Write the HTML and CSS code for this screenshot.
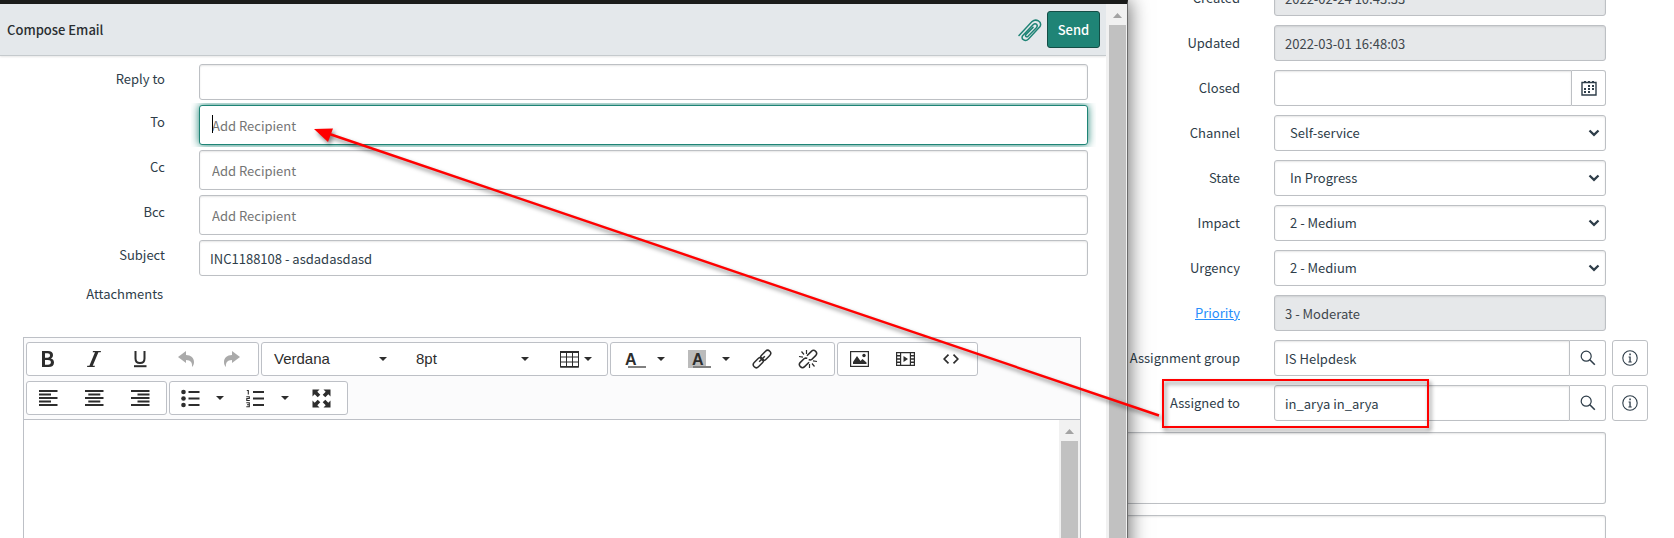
FILE: index.html
```html
<!DOCTYPE html>
<html lang="en">
<head>
<meta charset="utf-8">
<title>Compose Email</title>
<link rel="stylesheet" href="styles.css">
</head>
<body>
<svg class="defs" aria-hidden="true">
  <symbol id="caret" viewBox="0 0 8 4"><path d="M0 0h8L4 4z"/></symbol>
  <symbol id="search" viewBox="0 0 16 16"><circle cx="6.2" cy="6.2" r="5" fill="none" stroke="currentColor" stroke-width="1.2"/><path d="M9.8 9.8l5 5" stroke="currentColor" stroke-width="1.6"/></symbol>
  <symbol id="info" viewBox="0 0 16 16"><circle cx="8" cy="8" r="7.2" fill="none" stroke="currentColor" stroke-width="1.1"/><path d="M7.3 3.6h1.5v1.6H7.3zM6.6 6.6h2.1v5h1v.9H6.4v-.9h1V7.5h-.8z"/></symbol>
  <symbol id="chevron" viewBox="0 0 12 8"><path d="M1.500 1.500L6 5.800l4.500-4.300" fill="none" stroke="currentColor" stroke-width="2.300"/></symbol>
</svg>
<div class="page">
  <section class="compose">
    <div class="compose-main">
      <header class="compose-header">
        <h1 class="compose-title">Compose Email</h1>
        <button class="clip-button" type="button" aria-label="Add attachment">
          <svg class="outline" width="24" height="24" viewBox="0 0 24 24" stroke="currentColor" stroke-width="1.5" stroke-linecap="round"><path d="M1 17.500L14 3.600C18 .2 24.500 3.600 22 8.600L10.500 21C7.500 24 2.800 21.500 4.500 17.900L15 6.800C17.800 4.500 20.500 7 18.400 9.700L10 18.300C8.300 19.600 6.800 18 8 16.400L15 9.400"/></svg>
        </button>
        <button class="send-button" type="button">Send</button>
      </header>
      <form class="mail-form">
        <div class="mail-row"><label class="mail-label" for="reply">Reply to</label><input class="field" id="reply" type="text"></div>
        <div class="mail-row"><label class="mail-label" for="to">To</label><div class="focus-wrap"><input class="field field-recipient field-focus" id="to" type="text" placeholder="Add Recipient"><span class="text-cursor"></span></div></div>
        <div class="mail-row"><label class="mail-label" for="cc">Cc</label><input class="field field-recipient" id="cc" type="text" placeholder="Add Recipient"></div>
        <div class="mail-row"><label class="mail-label" for="bcc">Bcc</label><input class="field field-recipient" id="bcc" type="text" placeholder="Add Recipient"></div>
        <div class="mail-row"><label class="mail-label" for="subject">Subject</label><input class="field" id="subject" type="text" value="INC1188108 - asdadasdasd"></div>
        <div class="mail-row attachments"><span class="mail-label">Attachments</span></div>
      </form>
      <div class="editor">
        <div class="toolbar">
          <div class="group">
            <button class="tool" type="button" aria-label="Bold"><svg width="20" height="20" viewBox="0 0 20 20"><path fill-rule="evenodd" d="M4 2h6c3.200 0 5 1.400 5 4 0 1.700-.8 2.900-2.200 3.500 1.900.5 3.200 1.800 3.200 3.900 0 2.900-2 4.600-5.300 4.600H4zm3 2.300V8.700h2.500c1.600 0 2.500-.8 2.500-2.200s-.9-2.200-2.500-2.200zm0 6.600v4.800h3c1.900 0 2.900-.8 2.900-2.400s-1.100-2.400-3-2.400z"/></svg></button>
            <button class="tool" type="button" aria-label="Italic"><svg width="20" height="20" viewBox="0 0 20 20"><path d="M9 2h8l-.3 1.200h-2.300L8.700 16.800h2.200l-.3 1.200H3l.3-1.200h2.100L11 3.200H8.700z"/></svg></button>
            <button class="tool" type="button" aria-label="Underline"><svg width="20" height="20" viewBox="0 0 20 20"><path d="M5.500 2v7.500c0 3.200 1.700 4.500 4.500 4.500s4.500-1.300 4.500-4.500V2" fill="none" stroke="currentColor" stroke-width="2"/><path d="M4 16.200h12.500v2H4z"/></svg></button>
            <button class="tool tool-off" type="button" aria-label="Undo" disabled><svg width="20" height="20" viewBox="0 0 20 20"><path d="M2 8l8-6v4c5 0 8 3 8 7 0 2-.6 3.700-2 5 .5-4-1-7-6-7v3z"/></svg></button>
            <button class="tool tool-off" type="button" aria-label="Redo" disabled><svg width="20" height="20" viewBox="0 0 20 20"><path d="M18 8l-8-6v4c-5 0-8 3-8 7 0 2 .6 3.700 2 5-.5-4 1-7 6-7v3z"/></svg></button>
          </div>
          <div class="group">
            <button class="picker" type="button">Verdana<svg class="caret"><use href="#caret"/></svg></button>
            <button class="picker" type="button">8pt<svg class="caret"><use href="#caret"/></svg></button>
            <button class="tool table-tool" type="button" aria-label="Table"><svg width="19" height="17" viewBox="0 0 19 17"><path d="M.5 1h18v15H.5zM.5 6h18M.5 11h18M6.500 1v15M12.500 1v15" fill="none" stroke="currentColor" stroke-width="1"/><path d="M0 0h19v2H0zM0 15h19v1.500H0z"/></svg><svg class="caret"><use href="#caret"/></svg></button>
          </div>
          <div class="group">
            <button class="tool color-tool" type="button" aria-label="Text color"><svg class="swatch" width="24" height="20"><text x="2" y="16">A</text><path class="swatch-line" d="M5 17h18v2H5z"/></svg></button>
            <button class="drop color-drop" type="button" aria-label="Text color options"><svg class="caret"><use href="#caret"/></svg></button>
            <button class="tool color-tool" type="button" aria-label="Background color"><svg class="swatch" width="24" height="20"><path class="swatch-fill" d="M0 1h18v18H0z"/><text x="4" y="16">A</text><path class="swatch-line" d="M5 17h18v2H5z"/></svg></button>
            <button class="drop color-drop" type="button" aria-label="Background color options"><svg class="caret"><use href="#caret"/></svg></button>
            <button class="tool" type="button" aria-label="Insert link"><svg class="outline" width="20" height="20" viewBox="0 0 20 20" stroke="currentColor" stroke-width="1.500"><g transform="rotate(-45 10 10)"><rect x="-1" y="7" width="11.600" height="6" rx="3"/><rect x="9.400" y="7" width="11.600" height="6" rx="3"/><path d="M6 10h8"/></g></svg></button>
            <button class="tool" type="button" aria-label="Remove link"><svg class="outline" width="20" height="20" viewBox="0 0 20 20" stroke="currentColor" stroke-width="1.500"><g transform="rotate(-45 10 10)"><path d="M8.500 7H2.200a3 3 0 0 0 0 6h6.300M11.500 7h6.300a3 3 0 0 1 0 6h-6.300M8.500 7l1.500 2M11.500 13l-1.500-2"/></g><path d="M8.500 1v4M3.500 2.500l2.500 3M1 7.500l4 .6M11.500 19v-4M16.500 17.500l-2.500-3M19 12.500l-4-.6" stroke-width="1.200"/></svg></button>
          </div>
          <div class="group">
            <button class="tool" type="button" aria-label="Insert image"><svg width="19" height="16" viewBox="0 0 19 16"><rect x=".6" y=".6" width="17.800" height="14.800" fill="none" stroke="currentColor" stroke-width="1.200"/><path d="M3 13V11l4-6 3.500 5L12.500 8l4 3.500V13z"/><circle cx="14" cy="4.500" r="1.700"/></svg></button>
            <button class="tool" type="button" aria-label="Insert video"><svg width="19" height="14" viewBox="0 0 19 14"><path d="M.6.6h17.800v12.800H.6zM4.600.6v12.800M14.400.6v12.800" fill="none" stroke="currentColor" stroke-width="1.200"/><path d="M0 3h5v1.600H0zM0 6.200h5v1.600H0zM0 9.500h5v1.600H0zM14 3h5v1.600h-5zM14 6.200h5v1.600h-5zM14 9.500h5v1.600h-5zM7.500 4l4.500 3-4.500 3z"/></svg></button>
            <button class="tool" type="button" aria-label="Source code"><svg width="16" height="10" viewBox="0 0 16 10"><path d="M5.500.7L1.200 5l4.300 4.300M10.500.7L14.800 5l-4.300 4.300" fill="none" stroke="currentColor" stroke-width="1.700"/></svg></button>
          </div>
          <div class="group">
            <button class="tool" type="button" aria-label="Align left"><svg width="19" height="16" viewBox="0 0 19 16"><path d="M0 0h18.500v2H0zM0 3.500h12v2H0zM0 7h18.500v2H0zM0 10.500h12v2H0zM0 14h18.500v2H0z"/></svg></button>
            <button class="tool" type="button" aria-label="Align center"><svg width="19" height="16" viewBox="0 0 19 16"><path d="M0 0h18.500v2H0zM3.300 3.500h12v2h-12zM0 7h18.500v2H0zM3.300 10.500h12v2h-12zM0 14h18.500v2H0z"/></svg></button>
            <button class="tool" type="button" aria-label="Align right"><svg width="19" height="16" viewBox="0 0 19 16"><path d="M0 0h18.500v2H0zM6.500 3.500h12v2h-12zM0 7h18.500v2H0zM6.500 10.500h12v2h-12zM0 14h18.500v2H0z"/></svg></button>
          </div>
          <div class="group">
            <button class="tool list-tool" type="button" aria-label="Bullet list"><svg width="19" height="19" viewBox="0 0 19 19"><circle cx="2.500" cy="3" r="2.300"/><circle cx="2.500" cy="9.500" r="2.300"/><circle cx="2.500" cy="16" r="2.300"/><path d="M7.500 2h11v2h-11zM7.500 8.500h11v2h-11zM7.500 15h11v2h-11z"/></svg></button>
            <button class="drop" type="button" aria-label="Bullet list options"><svg class="caret"><use href="#caret"/></svg></button>
            <button class="tool list-tool" type="button" aria-label="Numbered list"><svg width="19" height="19" viewBox="0 0 19 19"><path d="M.8 1.500h1.500v4M.3 7.800h3v1.700h-2.500v2h3M.3 13.700h3v4h-3M1 15.700h2" fill="none" stroke="currentColor" stroke-width="1.100"/><path d="M7 2h11v2H7zM7 8.500h11v2H7zM7 15h11v2H7z"/></svg></button>
            <button class="drop" type="button" aria-label="Numbered list options"><svg class="caret"><use href="#caret"/></svg></button>
            <button class="tool" type="button" aria-label="Full screen"><svg width="19" height="19" viewBox="0 0 19 19"><path d="M.5.5h7L5.300 2.700l3 3L5.700 8.300l-3-3L.5 7.500zM18.500.5v7l-2.200-2.200-3 3-2.600-2.600 3-3L11.500.5zM.5 18.500v-7l2.200 2.200 3-3 2.600 2.600-3 3 2.200 2.200zM18.500 18.500h-7l2.200-2.200-3-3 2.600-2.600 3 3 2.200-2.200z"/></svg></button>
          </div>
        </div>
        <div class="editor-body">
          <div class="editor-text" contenteditable="true" role="textbox" aria-label="Message body"></div>
          <div class="scrollbar"><svg class="scroll-arrow"><path d="M0 5L4.500 0 9 5z"/></svg><div class="thumb"></div></div>
        </div>
      </div>
    </div>
    <div class="scrollbar scrollbar-outer"><svg class="scroll-arrow"><path d="M0 5L4.500 0 9 5z"/></svg><div class="thumb"></div></div>
  </section>

  <form class="record">
    <div class="record-row"><label class="record-label" for="created">Created</label><input class="field" id="created" type="text" value="2022-02-24 10:43:33" readonly></div>
    <div class="record-row"><label class="record-label" for="updated">Updated</label><input class="field" id="updated" type="text" value="2022-03-01 16:48:03" readonly></div>
    <div class="record-row"><label class="record-label" for="closed">Closed</label><div class="combo"><input class="field" id="closed" type="text"><button class="addon addon-date" type="button" aria-label="Pick date"><svg width="16" height="16" viewBox="0 0 16 16"><path d="M1 2.500h14V15H1z" fill="none" stroke="currentColor" stroke-width="1.400"/><path d="M3 1h2v2H3zM7 1h2v2H7zM11 1h2v2h-2zM7 5h2v2H7zM11 5h2v2h-2zM3 8h2v2H3zM7 8h2v2H7zM11 8h2v2h-2zM3 11h2v2H3zM7 11h2v2H7z"/></svg></button></div></div>
    <div class="record-row"><label class="record-label" for="channel">Channel</label><div class="select-wrap"><select class="field" id="channel"><option>Self-service</option></select><svg class="chevron"><use href="#chevron"/></svg></div></div>
    <div class="record-row"><label class="record-label" for="state">State</label><div class="select-wrap"><select class="field" id="state"><option>In Progress</option></select><svg class="chevron"><use href="#chevron"/></svg></div></div>
    <div class="record-row"><label class="record-label" for="impact">Impact</label><div class="select-wrap"><select class="field" id="impact"><option>2 - Medium</option></select><svg class="chevron"><use href="#chevron"/></svg></div></div>
    <div class="record-row"><label class="record-label" for="urgency">Urgency</label><div class="select-wrap"><select class="field" id="urgency"><option>2 - Medium</option></select><svg class="chevron"><use href="#chevron"/></svg></div></div>
    <div class="record-row"><label class="record-label" for="priority"><a class="record-link" href="#priority">Priority</a></label><input class="field" id="priority" type="text" value="3 - Moderate" readonly></div>
    <div class="record-row"><label class="record-label" for="group">Assignment group</label><div class="combo"><input class="field" id="group" type="text" value="IS Helpdesk"><button class="addon" type="button" aria-label="Look up group"><svg width="16" height="16"><use href="#search"/></svg></button></div><button class="info-button" type="button" aria-label="Preview group"><svg width="16" height="16"><use href="#info"/></svg></button></div>
    <div class="record-row"><label class="record-label" for="assigned">Assigned to</label><div class="combo"><input class="field" id="assigned" type="text" value="in_arya in_arya"><button class="addon" type="button" aria-label="Look up user"><svg width="16" height="16"><use href="#search"/></svg></button></div><button class="info-button" type="button" aria-label="Preview user"><svg width="16" height="16"><use href="#info"/></svg></button></div>
    <textarea class="notes" aria-label="Short description"></textarea>
    <textarea class="notes" aria-label="Description"></textarea>
  </form>

  <svg class="annotation" width="1674" height="538" viewBox="0 0 1674 538" aria-hidden="true">
    <g fill="none" stroke="#f00" stroke-width="2">
      <path d="M1159 415.500L328 133.500" stroke-width="2.400"/>
      <rect x="1163" y="380" width="265" height="47"/>
    </g>
    <path d="M314 129l19-.5-5 13.500z" fill="#f00"/>
  </svg>
</div>
</body>
</html>
```

FILE: styles.css
```css
* { box-sizing: border-box; }
body {
  margin: 0;
  background: #fff;
  color: #2e3d49;
  font: 13px/20px "Noto Sans CJK SC", "Noto Sans", sans-serif;
}
button, input, select, textarea { font: inherit; color: inherit; margin: 0; }
svg { fill: currentColor; flex: none; }
svg.outline { fill: none; }
button { padding: 0; border: 0; background: none; }
.defs { position: absolute; width: 0; height: 0; }

.page {
  position: relative;
  display: grid;
  grid-template-columns: 1128fr 546fr;
  height: 100vh;
  overflow: hidden;
}

/* Compose window */
.compose {
  z-index: 1;
  display: flex;
  min-width: 0;
  min-height: 0;
  background: #fff;
  border-top: 4px solid #1b1c1b;
  border-right: 1px solid #6b6b6b;
  box-shadow: 2px 0 18px rgba(0, 0, 0, .55);
}
.compose-main { flex: 1; min-width: 0; display: flex; flex-direction: column; }
.compose-header {
  display: flex;
  align-items: center;
  height: 52px;
  flex: none;
  padding: 0 6px 0 7px;
  background: #e4e8eb;
  border-bottom: 1px solid #c5cacd;
  box-shadow: 0 1px 2px rgba(0, 0, 0, .1);
}
.compose-title { flex: 1; margin: 0; font-size: 13px; line-height: 20px; font-weight: 500; color: #2a2e31; }
.clip-button { width: 24px; height: 24px; margin-right: 5px; color: #1f8476; }
.send-button {
  width: 53px;
  height: 37px;
  border: 1px solid #134e46;
  border-radius: 3px;
  background: #1f8476;
  color: #fff;
  font-weight: 500;
}
.mail-form {
  display: grid;
  gap: 5px;
  padding: 8px 18px 0 0;
}
.mail-row {
  display: grid;
  grid-template-columns: 165px minmax(0, 1fr);
  column-gap: 34px;
  align-items: center;
}
.mail-label { text-align: right; padding-bottom: 6px; }
.attachments { height: 26px; }
.attachments .mail-label { padding: 0 2px 0 0; }

.field {
  display: block;
  width: 100%;
  height: 36px;
  padding: 0 10px;
  border: 1px solid #bdc0c4;
  border-radius: 3px;
  background: #fff;
  box-shadow: inset 0 1px 2px rgba(0, 0, 0, .1);
  outline: 0;
}
.field[readonly] { background: #e6e8ea; color: #3f474d; }
.field::placeholder { color: #757575; opacity: 1; }
.field-recipient { height: 40px; padding: 0 12px; }
.focus-wrap { position: relative; overflow: hidden; padding: 2px 8px; margin: -2px -8px; }
.field-focus { border-color: #1f8476; box-shadow: 0 0 8px #1f8476; }
.text-cursor { position: absolute; left: 21px; top: 12px; width: 1px; height: 18px; background: #000; }

/* Rich text editor */
.editor {
  flex: 1;
  min-height: 0;
  display: flex;
  flex-direction: column;
  margin: 30px 25px 0 23px;
  border: 1px solid #bdc0c6;
  border-bottom: 0;
  color: #2d2d2d;
}
.toolbar {
  display: flex;
  flex-wrap: wrap;
  gap: 5px 2px;
  padding: 4px 80px 4px 2px;
  background: #fbfbfc;
  border-bottom: 1px solid #bdc0c6;
}
.group {
  display: flex;
  height: 34px;
  padding: 0 1px 0 0;
  border: 1px solid #bdc0c6;
  border-radius: 3px;
  background: #fff;
}
.tool { display: flex; align-items: center; justify-content: center; width: 46px; padding-right: 4px; }
.tool-off { color: #aaa; }
.picker {
  display: flex;
  align-items: center;
  justify-content: space-between;
  width: 142px;
  padding: 0 17px 0 12px;
  font: 15px/20px "Liberation Sans", sans-serif;
}
.table-tool { width: 60px; gap: 5px; padding: 0; }
.caret { width: 8px; height: 4px; }
.drop { display: flex; align-items: center; width: 24px; padding-left: 5px; }
.color-tool { width: 36px; padding: 0; justify-content: flex-end; }
.color-drop { width: 29px; padding-left: 10px; }
.swatch { font: bold 16px/20px "Liberation Sans", sans-serif; }
.swatch-line { fill: #808080; }
.swatch-fill { fill: #bbb; }
.list-tool { width: 41px; padding: 0; }
.editor-body { flex: 1; display: flex; min-height: 0; }
.editor-text { flex: 1; outline: 0; }

.scrollbar {
  display: flex;
  flex-direction: column;
  align-items: center;
  width: 21px;
  flex: none;
  padding-top: 9px;
  background: #f1f1f1;
}
.scrollbar-outer { padding-left: 2px; }
.scroll-arrow { width: 9px; height: 5px; color: #a3a3a3; }
.thumb { flex: 1; width: 17px; margin-top: 7px; background: #c1c1c1; }

/* Incident record */
.record {
  display: flex;
  flex-direction: column;
  gap: 9px;
  min-width: 0;
  margin-top: -20px;
}
.record-row {
  display: grid;
  grid-template-columns: 112px minmax(0, 1fr) 36px;
  align-items: center;
  padding-right: 26px;
  flex: none;
}
.record-row > :nth-child(2) { margin: 0 6px 0 34px; width: auto; }
.record-label { text-align: right; white-space: nowrap; }
.record-link { color: #278efc; text-decoration: underline; }
.combo { display: flex; }
.combo .field { flex: 1; min-width: 0; border-radius: 3px 0 0 3px; }
.addon {
  display: flex;
  align-items: center;
  justify-content: center;
  width: 36px;
  border: 1px solid #bdc0c4;
  border-left: 0;
  border-radius: 0 3px 3px 0;
}
.addon-date { width: 34px; }
.info-button {
  display: flex;
  align-items: center;
  justify-content: center;
  height: 36px;
  border: 1px solid #bdc0c4;
  border-radius: 3px;
}
.select-wrap { position: relative; }
.select-wrap .field { appearance: none; padding: 0 30px 0 15px; }
.chevron { position: absolute; right: 6px; top: 14px; width: 12px; height: 8px; pointer-events: none; }
.notes {
  display: block;
  flex: none;
  height: 72px;
  margin: 2px 68px 0 0;
  border: 1px solid #bdc0c4;
  border-left: 0;
  border-radius: 0 3px 3px 0;
  resize: none;
  box-shadow: inset 0 1px 2px rgba(0, 0, 0, .1);
}

/* Arrow and frame drawn over both panels */
.annotation {
  position: absolute;
  z-index: 2;
  left: 0;
  top: 0;
  pointer-events: none;
  filter: drop-shadow(2px 3px 2px rgba(0, 0, 0, .5));
}
```
